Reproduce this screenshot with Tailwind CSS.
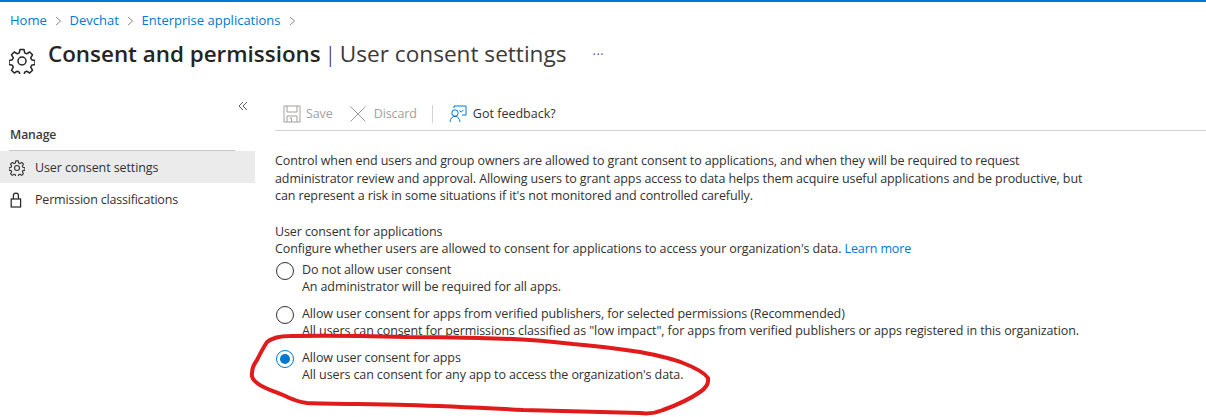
<!DOCTYPE html>
<html>
<head>
<meta charset="utf-8">
<script src="https://cdn.jsdelivr.net/npm/@tailwindcss/browser@4"></script>
</head>
<body class="bg-white">
<div class="relative w-[1206px] h-[417px] overflow-hidden bg-white text-[#323130] font-['Open_Sans','Noto_Sans',sans-serif] text-[12.5px] leading-[17.5px] tracking-[-0.1px]">
  <div class="h-[2px] bg-[#0078d4]"></div>
  <nav class="flex items-center h-[20px] mt-[9px] pl-[10px] gap-[6.4px] text-[#0078d4] text-[13px] tracking-normal">
    <span>Home</span>
    <svg class="w-[10px] h-[10px] text-[#8a8886]" viewBox="0 0 10 10" fill="none" stroke="currentColor"><path d="M3 1l4.5 4L3 9"/></svg>
    <span>Devchat</span>
    <svg class="w-[10px] h-[10px] text-[#8a8886]" viewBox="0 0 10 10" fill="none" stroke="currentColor"><path d="M3 1l4.5 4L3 9"/></svg>
    <span>Enterprise applications</span>
    <svg class="w-[10px] h-[10px] text-[#8a8886]" viewBox="0 0 10 10" fill="none" stroke="currentColor"><path d="M3 1l4.5 4L3 9"/></svg>
  </nav>
  <header class="flex items-start h-[66px] pl-[9px]">
    <svg class="w-[26px] h-[26px] mt-[17px] text-[#252423]" viewBox="0 0 26 26" fill="none" stroke="currentColor" stroke-width="1.5" stroke-linejoin="round"><circle cx="13" cy="13" r="4"/><path d="M11 1.5h4l.7 3.4 2 .9 3-1.8 2.8 2.8-1.8 3 .9 2 3.4.7v4l-3.4.7-.9 2 1.8 3-2.8 2.8-3-1.8-2 .9-.7 3.4h-4l-.7-3.4-2-.9-3 1.8-2.8-2.8 1.8-3-.9-2-3.4-.7v-4l3.4-.7.9-2-1.8-3 2.8-2.8 3 1.8 2-.9z"/></svg>
    <h1 class="ml-[13px] mt-[6px] text-[22.4px] leading-[34px] whitespace-nowrap text-[#252423] tracking-normal flex"><span class="font-semibold">Consent and permissions</span><span class="mx-[3.5px] font-light">|</span><span class="text-[#3b3a39] text-[22.6px]">User consent settings</span></h1>
    <span class="ml-[26px] mt-[11px] text-[13px] text-[#605e5c] tracking-[0.5px]">...</span>
  </header>
  <div class="flex">
    <aside class="w-[255px] shrink-0">
      <div class="flex justify-end h-[25px] pr-[7px] pt-[2px]">
        <svg class="w-[10px] h-[14px] text-[#605e5c]" viewBox="0 0 10 14" fill="none" stroke="currentColor"><path d="M5 3L1 7l4 4M9 3L5 7l4 4"/></svg>
      </div>
      <div class="mx-[9px] w-[226px] h-[29px] pl-[1px] pb-[3px] flex items-center border-b border-[#c8c6c4] font-semibold text-[12.2px] text-[#3b3a39]">Manage</div>
      <div class="flex items-center h-[32px] pl-[9px] gap-[10px] bg-[#ebebeb] pt-[2px]">
        <svg class="w-[16px] h-[16px] text-[#323130]" viewBox="0 0 26 26" fill="none" stroke="currentColor" stroke-width="1.8" stroke-linejoin="round"><circle cx="13" cy="13" r="4"/><path d="M11 1.5h4l.7 3.4 2 .9 3-1.8 2.8 2.8-1.8 3 .9 2 3.4.7v4l-3.4.7-.9 2 1.8 3-2.8 2.8-3-1.8-2 .9-.7 3.4h-4l-.7-3.4-2-.9-3 1.8-2.8-2.8 1.8-3-.9-2-3.4-.7v-4l3.4-.7.9-2-1.8-3 2.8-2.8 3 1.8 2-.9z"/></svg>
        <span>User consent settings</span>
      </div>
      <div class="flex items-center h-[32px] pl-[9px] gap-[10px] pt-[2px]">
        <svg class="w-[16px] h-[16px] text-[#252423]" viewBox="0 0 16 16" fill="none" stroke="currentColor" stroke-width="1.2"><rect x="2.2" y="7" width="9.4" height="8"/><path d="M4.4 7V3.6a2.5 2.5 0 015 0V7"/></svg>
        <span class="tracking-[-0.2px]">Permission classifications</span>
      </div>
    </aside>
    <main class="ml-[20px] flex-1">
      <div class="flex items-center h-[34px] border-b border-[#d2d0ce] pl-[8px]">
        <svg class="w-[18px] h-[18px] text-[#a19f9d]" viewBox="0 0 18 18" fill="none" stroke="currentColor"><path d="M1 1h16v16H1zM4 1v6h10V1M4 17v-6h10v6M6.5 13h2v4"/></svg>
        <span class="ml-[5px] text-[#a19f9d]">Save</span>
        <svg class="ml-[16px] w-[18px] h-[18px] text-[#a19f9d]" viewBox="0 0 18 18" fill="none" stroke="currentColor"><path d="M1.5 1.5l15 15M16.5 1.5l-15 15"/></svg>
        <span class="ml-[7px] text-[#a19f9d] tracking-[-0.1px]">Discard</span>
        <span class="ml-[15px] w-px h-[18px] bg-[#d2d0ce]"></span>
        <svg class="ml-[16px] w-[18px] h-[18px] text-[#0078d4]" viewBox="0 0 18 18" fill="none" stroke="currentColor"><circle cx="6" cy="8" r="3.2"/><path d="M1 17c.4-3.4 2.2-5.7 5-5.7s4.6 2.3 5 5.7M5 3V1h12v9h-4"/><path d="M10.5 5.5l1.7 1.7 2.3-2.4" stroke-width="1"/></svg>
        <span class="ml-[6px] tracking-normal">Got feedback?</span>
      </div>
      <div class="mt-[21px] whitespace-nowrap">
        <p>Control when end users and group owners are allowed to grant consent to applications, and when they will be required to request<br>administrator review and approval. Allowing users to grant apps access to data helps them acquire useful applications and be productive, but<br>can represent a risk in some situations if it's not monitored and controlled carefully.</p>
        <p class="mt-[18px]">User consent for applications<br>Configure whether users are allowed to consent for applications to access your organization's data. <span class="text-[#0078d4]">Learn more</span></p>
      </div>
      <div class="mt-[3px] whitespace-nowrap">
        <label class="flex gap-[8px] pl-px">
          <span class="mt-[1px] w-[18px] h-[18px] rounded-full border border-[#323130]"></span>
          <span class="block">Do not allow user consent<br>An administrator will be required for all apps.</span>
        </label>
        <label class="flex gap-[8px] pl-px mt-[9px]">
          <span class="mt-[1px] w-[18px] h-[18px] rounded-full border border-[#323130]"></span>
          <span class="block">Allow user consent for apps from verified publishers, for selected permissions (Recommended)<br>All users can consent for permissions classified as "low impact", for apps from verified publishers or apps registered in this organization.</span>
        </label>
        <label class="flex gap-[8px] pl-px mt-[9px]">
          <span class="mt-[1px] w-[18px] h-[18px] rounded-full border border-[#0078d4] flex items-center justify-center"><span class="w-[10px] h-[10px] rounded-full bg-[#0078d4]"></span></span>
          <span class="block">Allow user consent for apps<br>All users can consent for any app to access the organization's data.</span>
        </label>
      </div>
    </main>
  </div>
  <svg class="absolute left-0 top-0 w-[1206px] h-[417px] pointer-events-none" viewBox="0 0 1206 417" fill="none">
    <path d="M267 342C272 338 280 336 290 336C330 335 370 336 407 337C445 337 480 338 513 339C535 340 555 342 573 344C597 346 620 349 640 352C656 355 671 358 683 363C696 368 704 372 708 378C709 384 706 388 700 392C690 399 677 405 663 410C656 413 648 414 640 413C600 412 560 411 523 410C485 408 445 406 407 405C372 404 338 404 307 403C298 402 291 399 283 395C273 391 263 388 257 383C253 380 251 377 252 373C252 368 254 364 257 360C260 354 263 348 267 342" stroke="#e01b1b" stroke-width="4" stroke-linecap="round" stroke-linejoin="round"/>
  </svg>
</div>
</body>
</html>
